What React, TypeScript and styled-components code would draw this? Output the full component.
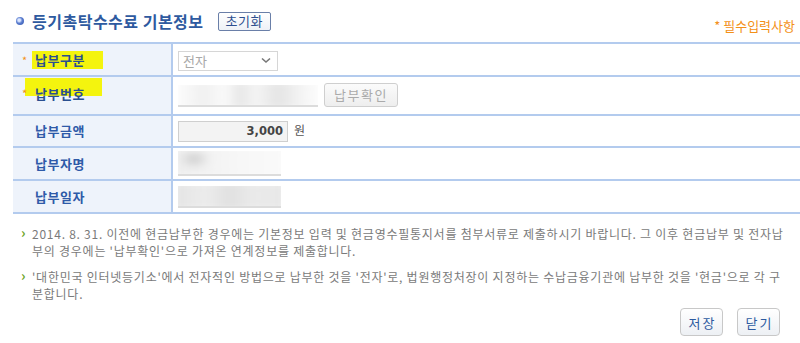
import React from "react";
import styled, { createGlobalStyle } from "styled-components";

const Global = createGlobalStyle`
  body { margin: 0; background: #fff; font-family: "Noto Sans CJK KR", "Noto Sans", sans-serif; }
`;

const Page = styled.div`
  width: 800px;
  height: 343px;
  overflow: hidden;
`;

const Header = styled.div`
  height: 42px;
  display: flex;
  align-items: center;
  padding: 0 5px 0 16px;
`;

const TitleIcon = styled.span`
  width: 8px;
  height: 8px;
  border-radius: 50%;
  background: radial-gradient(circle at 40% 40%, #dbe6ff 0 18%, #5b7ed0 45%, #2d4fa8 100%);
  margin-right: 8px;
`;

const Title = styled.h1`
  margin: 0;
  font-size: 16px;
  font-weight: 700;
  color: #2e5aa0;
  letter-spacing: 0.5px;
`;

const ResetButton = styled.button`
  margin-left: 14px;
  height: 19px;
  padding: 0 7px;
  border: 1px solid #6a7fa8;
  border-radius: 2px;
  background: linear-gradient(#ffffff, #eef1f6);
  color: #2e4f8f;
  font: inherit;
  font-size: 13px;
  line-height: 16px;
  letter-spacing: 0.5px;
`;

const Required = styled.div`
  margin-left: auto;
  margin-top: 9px;
  color: #f39018;
  font-size: 13px;
`;

const Table = styled.div`
  margin-left: 13px;
  border-top: 2px solid #b3cbee;
  display: grid;
  grid-template-columns: 160px 1fr;
`;

const Label = styled.div<{ $h: number; $top?: boolean }>`
  height: ${(p) => p.$h}px;
  background: #eef3fb;
  border-right: 2px solid #b3cbee;
  border-bottom: 2px solid #b3cbee;
  display: flex;
  align-items: ${(p) => (p.$top ? "flex-start" : "center")};
  padding-left: 9px;
  box-sizing: border-box;
  color: #2e5aa8;
  font-weight: 700;
  font-size: 13px;
  letter-spacing: 0.5px;
`;

const Star = styled.span<{ $dy?: number }>`
  color: #f39018;
  width: 10px;
  font-size: 11px;
  font-weight: 400;
  margin-top: ${(p) => p.$dy ?? 0}px;
  position: relative;
  z-index: 1;
`;

const Mark = styled.span<{ $on?: boolean }>`
  display: inline-block;
  height: 18px;
  line-height: 18px;
  background: ${(p) => (p.$on ? "#f4f40e" : "transparent")};
  padding: 0 18px 0 3px;
  color: ${(p) => (p.$on ? "#2a4f90" : "#2e5aa8")};
`;

const LowMark = styled(Mark)`
  margin: 1px 0 0 -7px;
  padding: 0 17px 0 10px;
`;

const Shifted = styled.span`
  position: relative;
  top: 7px;
`;

const Cell = styled.div<{ $h: number }>`
  height: ${(p) => p.$h}px;
  border-bottom: 2px solid #b3cbee;
  box-sizing: border-box;
  display: flex;
  align-items: center;
  padding-left: 5px;
  gap: 6px;
  font-size: 12px;
  color: #444;
`;

const Select = styled.div`
  width: 100px;
  height: 20px;
  box-sizing: border-box;
  border: 1px solid #d6d6d6;
  display: flex;
  align-items: center;
  justify-content: space-between;
  padding: 0 6px 0 4px;
  color: #a8a8a8;
  font-size: 13px;
  margin-top: 2px;
`;

const Blur = styled.div<{ $w: number; $h: number }>`
  width: ${(p) => p.$w}px;
  height: ${(p) => p.$h}px;
  position: relative;
  overflow: hidden;
  border-bottom: 2px solid #dcdcdc;
  box-sizing: border-box;
  &::before {
    content: "";
    position: absolute;
    inset: -6px;
    filter: blur(5px);
    background: var(--bg);
  }
`;

const GrayButton = styled.button`
  height: 24px;
  width: 74px;
  border: 1px solid #cfcfcf;
  border-radius: 3px;
  background: linear-gradient(#fbfbfb, #eeeeee);
  color: #aaa;
  font: inherit;
  font-size: 13px;
  letter-spacing: 1.5px;
  margin-top: -2px;
`;

const Amount = styled.div`
  width: 110px;
  height: 21px;
  box-sizing: border-box;
  border: 1px solid #cfcfcf;
  background: #f3f3f3;
  text-align: right;
  padding-right: 4px;
  font-family: "DejaVu Sans", sans-serif;
  font-weight: 700;
  font-size: 11.5px;
  line-height: 19px;
  color: #444;
`;

const Unit = styled.span`
  color: #555;
  font-size: 12px;
  margin-top: -4px;
`;

const Notes = styled.ul`
  list-style: none;
  margin: 0;
  padding: 11px 8px 0 21px;
`;

const Note = styled.li`
  position: relative;
  padding-left: 11px;
  color: #7a7a7a;
  font-size: 12px;
  line-height: 17px;
  margin-bottom: 9px;
  letter-spacing: 0.75px;
  word-break: break-all;
  &:last-child {
    margin-bottom: 0;
  }
  &::before {
    content: "›";
    position: absolute;
    left: 0;
    top: -1px;
    color: #6aa31f;
    font-weight: 700;
    font-size: 14px;
  }
`;

const Footer = styled.div`
  display: flex;
  justify-content: flex-end;
  gap: 14px;
  padding: 6px 20px 0 0;
`;

const ActionButton = styled.button`
  height: 28px;
  width: 43px;
  border: 1px solid #c8c8c8;
  border-radius: 4px;
  background: linear-gradient(#ffffff, #edf0f4);
  color: #2c5aa0;
  font: inherit;
  font-size: 13px;
  letter-spacing: 2px;
  padding: 0 0 0 2px;
`;

const Chevron = () => (
  <svg width="10" height="7" viewBox="0 0 10 7">
    <path d="M1 1.5 L5 5 L9 1.5" fill="none" stroke="#777" strokeWidth="1.6" />
  </svg>
);

export default function App() {
  return (
    <Page>
      <Global />
      <Header>
        <TitleIcon />
        <Title>등기촉탁수수료 기본정보</Title>
        <ResetButton>초기화</ResetButton>
        <Required>* 필수입력사항</Required>
      </Header>
      <Table>
        <Label $h={33}>
          <Star>*</Star>
          <Mark $on>납부구분</Mark>
        </Label>
        <Cell $h={33}>
          <Select>
            전자
            <Chevron />
          </Select>
        </Cell>
        <Label $h={39} $top>
          <Star $dy={8}>*</Star>
          <LowMark $on>
            <Shifted>납부번호</Shifted>
          </LowMark>
        </Label>
        <Cell $h={39}>
          <Blur
            $w={140}
            $h={22}
            style={{ ["--bg" as any]: "linear-gradient(90deg,#fff 0%,#f0f0f0 20%,#fafafa 35%,#e6e6e6 45%,#f5f5f5 55%,#e4e4e4 70%,#f4f4f4 85%,#fff 100%)" }}
          />
          <GrayButton>납부확인</GrayButton>
        </Cell>
        <Label $h={32}>
          <Star />
          <Mark>납부금액</Mark>
        </Label>
        <Cell $h={32}>
          <Amount>3,000</Amount>
          <Unit>원</Unit>
        </Cell>
        <Label $h={33}>
          <Star />
          <Mark>납부자명</Mark>
        </Label>
        <Cell $h={33}>
          <Blur
            $w={103}
            $h={25}
            style={{ ["--bg" as any]: "radial-gradient(ellipse 18px 8px at 22px 14px,#b8b8b8,#e8e8e8 70%,transparent),linear-gradient(90deg,#eeeeee,#f7f7f7 60%,#fafafa)" }}
          />
        </Cell>
        <Label $h={33}>
          <Star />
          <Mark>납부일자</Mark>
        </Label>
        <Cell $h={33}>
          <Blur
            $w={103}
            $h={22}
            style={{ ["--bg" as any]: "linear-gradient(90deg,#e4e4e4,#ececec 30%,#e0e0e0 50%,#eaeaea 70%,#e8e8e8)" }}
          />
        </Cell>
      </Table>
      <Notes>
        <Note>
          2014. 8. 31. 이전에 현금납부한 경우에는 기본정보 입력 및 현금영수필통지서를 첨부서류로 제출하시기 바랍니다. 그 이후 현금납부 및 전자납부의 경우에는 '납부확인'으로 가져온 연계정보를 제출합니다.
        </Note>
        <Note>
          '대한민국 인터넷등기소'에서 전자적인 방법으로 납부한 것을 '전자'로, 법원행정처장이 지정하는 수납금융기관에 납부한 것을 '현금'으로 각 구분합니다.
        </Note>
      </Notes>
      <Footer>
        <ActionButton>저장</ActionButton>
        <ActionButton>닫기</ActionButton>
      </Footer>
    </Page>
  );
}
